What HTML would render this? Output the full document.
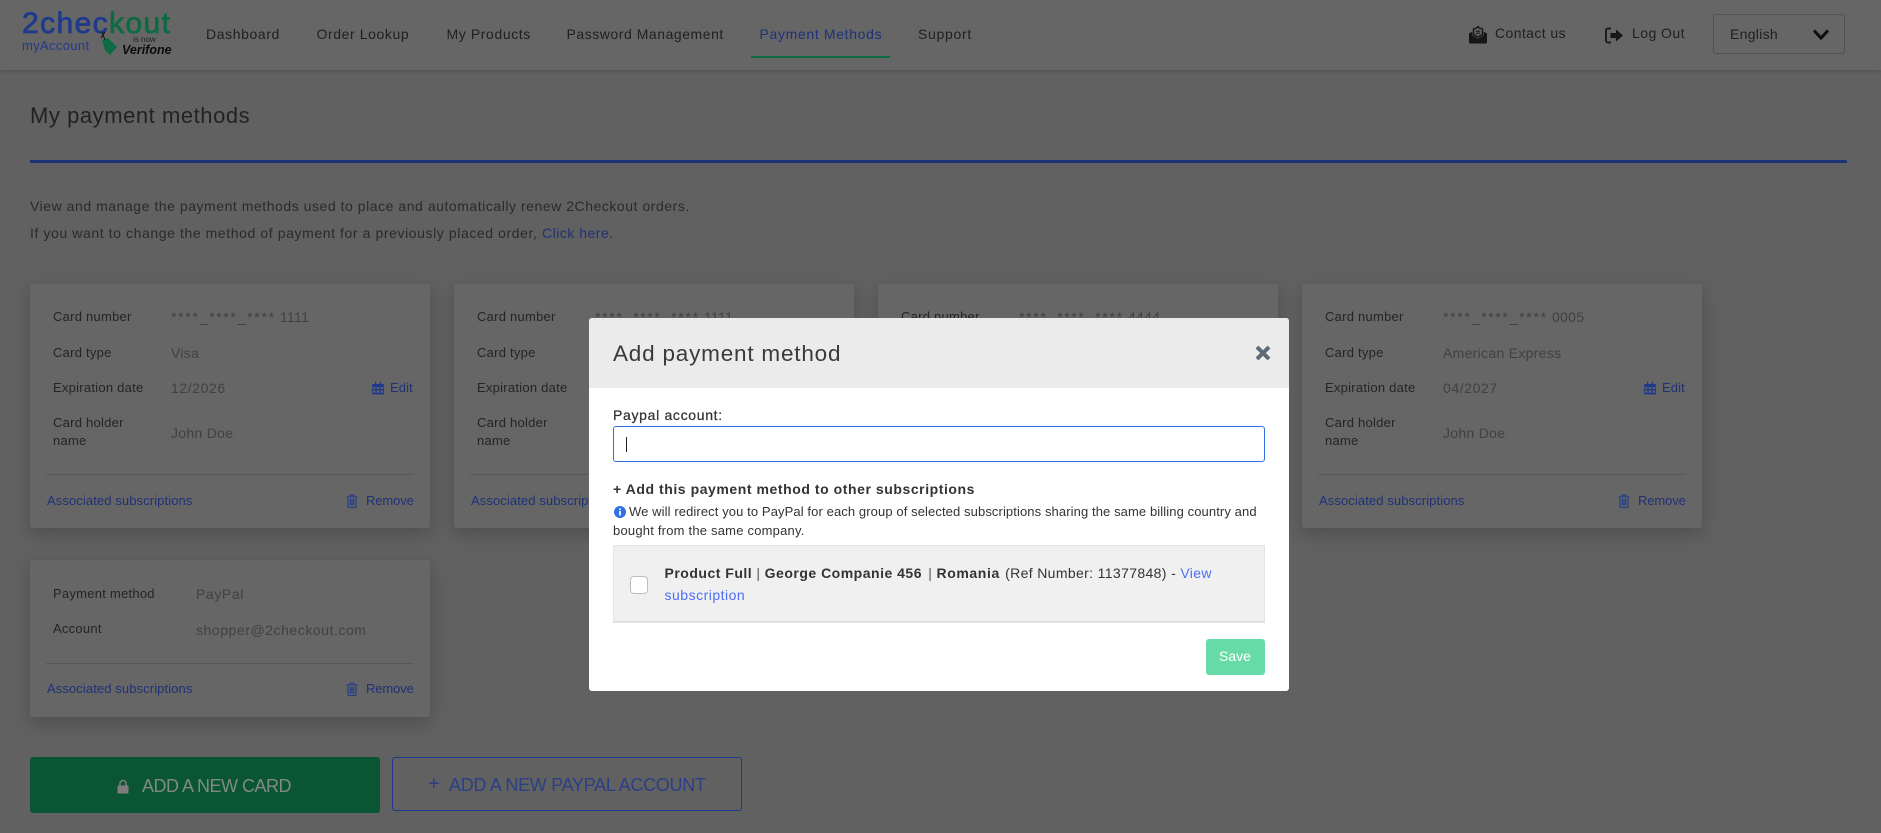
<!DOCTYPE html>
<html lang="en"><head><meta charset="utf-8"><title>My payment methods</title>
<style>
html,body{margin:0;padding:0}
body{width:1881px;height:833px;overflow:hidden;background:#616161;position:relative;font-family:"Liberation Sans",Arial,sans-serif;color:#222}
.t{position:absolute;white-space:nowrap;line-height:20px;height:20px}
.nav{font-size:14px;letter-spacing:.6px;color:#1f1f1f;top:24px}
.top{position:absolute;left:0;top:0;width:1881px;height:70px;background:#666;box-shadow:0 1px 4px rgba(0,0,0,.18)}
.rule{position:absolute;left:30px;top:160px;width:1817px;height:3px;background:#1b3276}
.card{position:absolute;width:400px;background:#666;border-radius:3px;box-shadow:0 6px 18px rgba(0,0,0,.2)}
.l{font-size:13px;letter-spacing:.25px;color:#242424;left:23px}
.v{font-size:14px;letter-spacing:.3px;color:#414141;left:141px}
.a{font-size:13px;letter-spacing:.1px;color:#1f3178}
.s{letter-spacing:1.7px;font-size:14px}
.d{position:absolute;left:16px;width:368px;height:1px;background:#585858}
svg{position:absolute;display:block}
.modal{position:absolute;left:589px;top:318px;width:700px;height:373px;background:#fff;border-radius:3px;overflow:hidden}
.mh{position:absolute;left:0;top:0;width:700px;height:70px;background:#ebebeb}
.m{color:#333;font-size:13px;letter-spacing:.1px}
b{font-weight:700;letter-spacing:.5px}
</style></head><body>
<div class="top"></div>
<div class="t" style="left:22px;top:6px;height:36px;line-height:36px;font-size:30px;letter-spacing:1.4px;-webkit-text-stroke:.8px #1f3a8c;color:#1f3a8c">2chec<span style="color:#0d6b44;-webkit-text-stroke:.8px #0d6b44">kout</span></div>
<div class="t" style="left:22px;top:36px;font-size:13px;letter-spacing:.35px;color:#23398a">myAccount</div>
<svg style="left:100px;top:31px" width="20" height="26" viewBox="0 0 20 26"><path d="M2 9 L8 7 L17 16 L10 24 L5 19 Z" fill="#0d6b44"/><path d="M2 1 L5 9 M5 1 L1 7" stroke="#111" stroke-width="1" fill="none"/></svg>
<div class="t" style="left:133px;top:30px;font-size:8px;color:#222">is now</div>
<div class="t" style="left:122px;top:40px;font-size:12.5px;font-weight:700;font-style:italic;color:#0c0c0c">Verifone</div>

<div class="t nav" style="left:206px">Dashboard</div>
<div class="t nav" style="left:316.5px">Order Lookup</div>
<div class="t nav" style="left:446.5px">My Products</div>
<div class="t nav" style="left:566.5px;letter-spacing:.54px">Password Management</div>
<div class="t nav" style="left:759.5px;color:#1f3178;letter-spacing:.66px">Payment Methods</div>
<div class="t nav" style="left:918px;letter-spacing:.7px">Support</div>
<div style="position:absolute;left:751px;top:56px;width:139px;height:2px;background:#0e6b41"></div>

<svg style="left:1468px;top:25px" width="20" height="19" viewBox="0 0 20 19"><path d="M6.500 3.500 H8 L10 1.500 L12 3.500 H13.500 A1 1 0 0 1 14.500 4.500 V9.500 L10 12 L5.500 9.500 V4.500 A1 1 0 0 1 6.500 3.500Z" fill="none" stroke="#161616" stroke-width="1.500"/><path d="M7.800 6.200H12.200M7.800 8.200H12.200" stroke="#161616" stroke-width="1.100"/><path d="M1 8.500 L4.300 6.700 V10.300 L10 13.500 L15.700 10.300 V6.700 L19 8.500 V17 A1.500 1.500 0 0 1 17.500 18.500 H2.500 A1.500 1.500 0 0 1 1 17Z" fill="#161616"/></svg>
<div class="t nav" style="left:1495px;top:23px;letter-spacing:.4px">Contact us</div>
<svg style="left:1605px;top:27px" width="19" height="17" viewBox="0 0 19 17"><path d="M6 1.500H3A2 2 0 0 0 1 3.500V13.500A2 2 0 0 0 3 15.500H6" fill="none" stroke="#161616" stroke-width="1.800"/><path d="M5.500 6H11V2.500L18 8.500 L11 14.500V11H5.500Z" fill="#161616"/></svg>
<div class="t nav" style="left:1632px;top:23px;letter-spacing:.45px">Log Out</div>
<div style="position:absolute;left:1713px;top:14px;width:130px;height:38px;border:1px solid #515151;border-radius:3px"></div>
<div class="t nav" style="left:1730px;letter-spacing:.3px">English</div>
<svg style="left:1812px;top:28px" width="18" height="13" viewBox="0 0 18 13"><path d="M2 2.500 L9 10 L16 2.500" fill="none" stroke="#0e0e0e" stroke-width="3"/></svg>

<div class="t" style="left:30px;top:103px;height:26px;line-height:26px;font-size:22px;letter-spacing:.55px;color:#222">My payment methods</div>
<div class="rule"></div>
<div class="t" style="left:30px;top:196px;font-size:14px;letter-spacing:.54px;color:#2a2a2a">View and manage the payment methods used to place and automatically renew 2Checkout orders.</div>
<div class="t" style="left:30px;top:223px;font-size:14px;letter-spacing:.59px;color:#2a2a2a">If you want to change the method of payment for a previously placed order, <span style="color:#1f3178;letter-spacing:.5px">Click here</span>.</div>

<!-- cards -->
<div class="card" style="left:30px;top:284px;height:244px">
<div class="t l" style="top:23px">Card number</div><div class="t v" style="top:23px"><span class="s">****_****_****</span>&nbsp;1111</div>
<div class="t l" style="top:59px">Card type</div><div class="t v" style="top:59px">Visa</div>
<div class="t l" style="top:94px">Expiration date</div><div class="t v" style="top:94px;letter-spacing:.6px">12/2026</div>
<div class="t l" style="top:129px">Card holder</div><div class="t l" style="top:147px">name</div><div class="t v" style="top:139px">John Doe</div>
<svg style="left:342px;top:97px" width="12" height="14" viewBox="0 0 12 14"><path d="M1 3H3V1H4.200V3H7.800V1H9V3H11A.8.8 0 0 1 11.800 3.800V12.500A1 1 0 0 1 10.800 13.500H1.200A1 1 0 0 1 .2 12.500V3.800A.8.8 0 0 1 1 3Z M1.300 6V8H3.300V6Z M4.800 6V8H7.200V6Z M8.700 6V8H10.700V6Z M1.300 9.300V11.800H3.300V9.300Z M4.800 9.300V11.800H7.200V9.300Z M8.700 9.300V11.800H10.700V9.300Z" fill="#1f3a8c" fill-rule="evenodd"/></svg>
<div class="t a" style="left:360px;top:94px">Edit</div>
<div class="d" style="top:190px"></div>
<div class="t a" style="left:17px;top:207px">Associated subscriptions</div>
<svg style="left:316px;top:210px" width="12" height="14" viewBox="0 0 12 14"><path d="M.5 3H11.500M4 3V1.200H8V3M2 3V12.300A1.200 1.200 0 0 0 3.200 13.500H8.800A1.200 1.200 0 0 0 10 12.300V3M4.300 5V11.500M6 5V11.500M7.700 5V11.500" fill="none" stroke="#1f3a8c" stroke-width="1.100"/></svg>
<div class="t a" style="left:336px;top:207px;letter-spacing:-.1px">Remove</div>
</div>

<div class="card" style="left:454px;top:284px;height:244px">
<div class="t l" style="top:23px">Card number</div><div class="t v" style="top:23px"><span class="s">****_****_****</span>&nbsp;1111</div>
<div class="t l" style="top:59px">Card type</div>
<div class="t l" style="top:94px">Expiration date</div>
<div class="t l" style="top:129px">Card holder</div><div class="t l" style="top:147px">name</div>
<div class="d" style="top:190px"></div>
<div class="t a" style="left:17px;top:207px">Associated subscriptions</div>
</div>

<div class="card" style="left:878px;top:284px;height:244px">
<div class="t l" style="top:23px">Card number</div><div class="t v" style="top:23px"><span class="s">****_****_****</span>&nbsp;4444</div>
</div>

<div class="card" style="left:1302px;top:284px;height:244px">
<div class="t l" style="top:23px">Card number</div><div class="t v" style="top:23px"><span class="s">****_****_****</span>&nbsp;0005</div>
<div class="t l" style="top:59px">Card type</div><div class="t v" style="top:59px">American Express</div>
<div class="t l" style="top:94px">Expiration date</div><div class="t v" style="top:94px;letter-spacing:.6px">04/2027</div>
<div class="t l" style="top:129px">Card holder</div><div class="t l" style="top:147px">name</div><div class="t v" style="top:139px">John Doe</div>
<svg style="left:342px;top:97px" width="12" height="14" viewBox="0 0 12 14"><path d="M1 3H3V1H4.200V3H7.800V1H9V3H11A.8.8 0 0 1 11.800 3.800V12.500A1 1 0 0 1 10.800 13.500H1.200A1 1 0 0 1 .2 12.500V3.800A.8.8 0 0 1 1 3Z M1.300 6V8H3.300V6Z M4.800 6V8H7.200V6Z M8.700 6V8H10.700V6Z M1.300 9.300V11.800H3.300V9.300Z M4.800 9.300V11.800H7.200V9.300Z M8.700 9.300V11.800H10.700V9.300Z" fill="#1f3a8c" fill-rule="evenodd"/></svg>
<div class="t a" style="left:360px;top:94px">Edit</div>
<div class="d" style="top:190px"></div>
<div class="t a" style="left:17px;top:207px">Associated subscriptions</div>
<svg style="left:316px;top:210px" width="12" height="14" viewBox="0 0 12 14"><path d="M.5 3H11.500M4 3V1.200H8V3M2 3V12.300A1.200 1.200 0 0 0 3.200 13.500H8.800A1.200 1.200 0 0 0 10 12.300V3M4.300 5V11.500M6 5V11.500M7.700 5V11.500" fill="none" stroke="#1f3a8c" stroke-width="1.100"/></svg>
<div class="t a" style="left:336px;top:207px;letter-spacing:-.1px">Remove</div>
</div>

<div class="card" style="left:30px;top:560px;height:157px">
<div class="t l" style="top:24px">Payment method</div><div class="t v" style="left:166px;top:24px;letter-spacing:.6px">PayPal</div>
<div class="t l" style="top:59px">Account</div><div class="t v" style="left:166px;top:60px;letter-spacing:.55px">shopper@2checkout.com</div>
<div class="d" style="top:103px"></div>
<div class="t a" style="left:17px;top:119px">Associated subscriptions</div>
<svg style="left:316px;top:122px" width="12" height="14" viewBox="0 0 12 14"><path d="M.5 3H11.500M4 3V1.200H8V3M2 3V12.300A1.200 1.200 0 0 0 3.200 13.500H8.800A1.200 1.200 0 0 0 10 12.300V3M4.300 5V11.500M6 5V11.500M7.700 5V11.500" fill="none" stroke="#1f3a8c" stroke-width="1.100"/></svg>
<div class="t a" style="left:336px;top:119px;letter-spacing:-.1px">Remove</div>
</div>

<div style="position:absolute;left:30px;top:757px;width:350px;height:56px;background:#0a5533;border-radius:3px"></div>
<svg style="left:117px;top:779px" width="12" height="15" viewBox="0 0 12 15"><path d="M3 6.500V4.500A3 3 0 0 1 9 4.500V6.500" fill="none" stroke="#7d7d7d" stroke-width="1.600"/><rect x=".5" y="6.500" width="11" height="8" rx="1" fill="#7d7d7d"/></svg>
<div class="t" style="left:142px;top:776px;font-size:18px;letter-spacing:-.5px;color:#7f8a85">ADD A NEW CARD</div>
<div style="position:absolute;left:392px;top:757px;width:348px;height:52px;border:1px solid #1f3a8c;border-radius:3px"></div>
<div class="t" style="left:428px;top:774px;font-size:20px;color:#2a3f85">+</div>
<div class="t" style="left:449px;top:775px;font-size:18px;letter-spacing:-.28px;color:#2a3f85">ADD A NEW PAYPAL ACCOUNT</div>

<!-- modal -->
<div class="modal">
<div class="mh"></div>
<div class="t" style="left:24px;top:23px;height:26px;line-height:26px;font-size:22.5px;letter-spacing:.8px;color:#3a3a3a">Add payment method</div>
<svg style="left:665px;top:27px" width="18" height="16" viewBox="0 0 18 16"><path d="M3 2 L15 14 M15 2 L3 14" stroke="#5d6b7a" stroke-width="4"/></svg>
<div class="t" style="left:24px;top:87px;font-size:14px;letter-spacing:.68px;color:#333;-webkit-text-stroke:.25px #333">Paypal account:</div>
<div style="position:absolute;left:24px;top:108px;width:650px;height:34px;border:1px solid #2f6fe8;border-radius:3px;background:#fff"></div>
<div style="position:absolute;left:37px;top:119px;width:1px;height:15px;background:#222"></div>
<div class="t" style="left:24px;top:161px;font-size:14px;font-weight:700;letter-spacing:.56px;color:#333">+ Add this payment method to other subscriptions</div>
<svg style="left:24.500px;top:188px" width="12" height="12" viewBox="0 0 12 12"><circle cx="6" cy="6" r="6" fill="#2f6fe8"/><rect x="5.200" y="5" width="1.700" height="4.500" fill="#fff"/><rect x="5.200" y="2.500" width="1.700" height="1.600" fill="#fff"/></svg>
<div class="t m" style="left:40px;top:184px">We will redirect you to PayPal for each group of selected subscriptions sharing the same billing country and</div>
<div class="t m" style="left:24px;top:203px;letter-spacing:.21px">bought from the same company.</div>
<div style="position:absolute;left:24px;top:227px;width:650px;height:75px;background:#f0f0f0;border:1px solid #e3e3e6;border-bottom:2px solid #e0e0e4"></div>
<div style="position:absolute;left:41px;top:258px;width:16px;height:16px;background:#fff;border:1px solid #bdbdbd;border-radius:4px"></div>
<div class="t" style="left:75.500px;top:245px;font-size:14px;letter-spacing:.36px;color:#333"><b>Product Full</b> <span style="color:#555">|</span> <b>George Companie 456</b> <span style="color:#555;margin-left:2px">|</span> <b style="letter-spacing:.6px">Romania</b> <span style="margin-left:1px">(Ref Number: 11377848) - </span><span style="color:#4d6ef5">View</span></div>
<div class="t" style="left:75.500px;top:267px;font-size:14px;letter-spacing:.5px;color:#4d6ef5">subscription</div>
<div style="position:absolute;left:617px;top:321px;width:59px;height:36px;background:#66dba8;border-radius:3px"></div>
<div class="t" style="left:630px;top:328px;font-size:14px;color:#fff">Save</div>
</div>
</body></html>
